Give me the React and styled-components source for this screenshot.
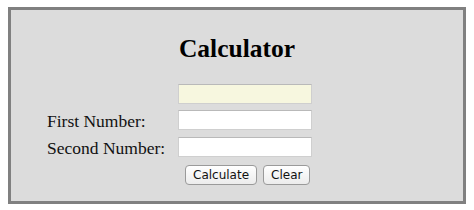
import React from "react";
import styled, { createGlobalStyle } from "styled-components";

const GlobalStyle = createGlobalStyle`
  html, body {
    margin: 0;
    padding: 0;
    background: #ffffff;
  }
  body {
    font-family: "Liberation Serif", "Times New Roman", serif;
  }
`;

const Page = styled.div`
  width: 474px;
  height: 210px;
  padding: 7px 8px 6px 8px;
  box-sizing: border-box;
`;

const Panel = styled.section`
  height: 197px;
  box-sizing: border-box;
  border: 3px solid #808080;
  background-color: #dcdcdc;
  padding: 0 0 0 36px;
`;

const Title = styled.h1`
  margin: 0;
  padding: 25px 0 0 0;
  margin-left: -36px;
  text-align: center;
  font-family: "Liberation Serif", "Times New Roman", serif;
  font-weight: bold;
  font-size: 25.5px;
  line-height: 28px;
  color: #000;
`;

const Form = styled.div`
  display: grid;
  grid-template-columns: 131px 134px;
  row-gap: 5px;
  align-items: center;
  margin-top: 21px;
`;

const Label = styled.label`
  font-family: "Liberation Serif", "Times New Roman", serif;
  font-size: 17.5px;
  color: #111;
  line-height: 20px;
  padding-top: 2px;
`;

const Field = styled.input`
  width: 134px;
  height: 20px;
  box-sizing: border-box;
  margin: 0;
  border: 1px solid #cfcfcf;
  border-top-color: #b9b9b9;
  background-color: ${(props) => (props.$result ? "#f7f7df" : "#ffffff")};
  font-size: 13px;
  padding: 0 3px;
  outline: none;
`;

const Buttons = styled.div`
  grid-column: 2;
  display: flex;
  gap: 6px;
  padding-left: 7px;
  margin-top: 2px;
`;

const Button = styled.button`
  height: 20px;
  box-sizing: border-box;
  padding: 0 7px;
  margin: 0;
  border: 1px solid #9a9a9a;
  border-radius: 4px;
  background: linear-gradient(#ffffff, #ececec);
  font-family: "DejaVu Sans", "Liberation Sans", sans-serif;
  font-size: 12px;
  color: #111;
  line-height: 18px;
`;

const App = () => {
  return (
    <>
      <GlobalStyle />
      <Page>
        <Panel>
          <Title>Calculator</Title>
          <Form>
            <span />
            <Field type="text" $result readOnly />
            <Label>First Number:</Label>
            <Field type="text" />
            <Label>Second Number:</Label>
            <Field type="text" />
            <Buttons>
              <Button type="button">Calculate</Button>
              <Button type="button">Clear</Button>
            </Buttons>
          </Form>
        </Panel>
      </Page>
    </>
  );
};

export default App;
